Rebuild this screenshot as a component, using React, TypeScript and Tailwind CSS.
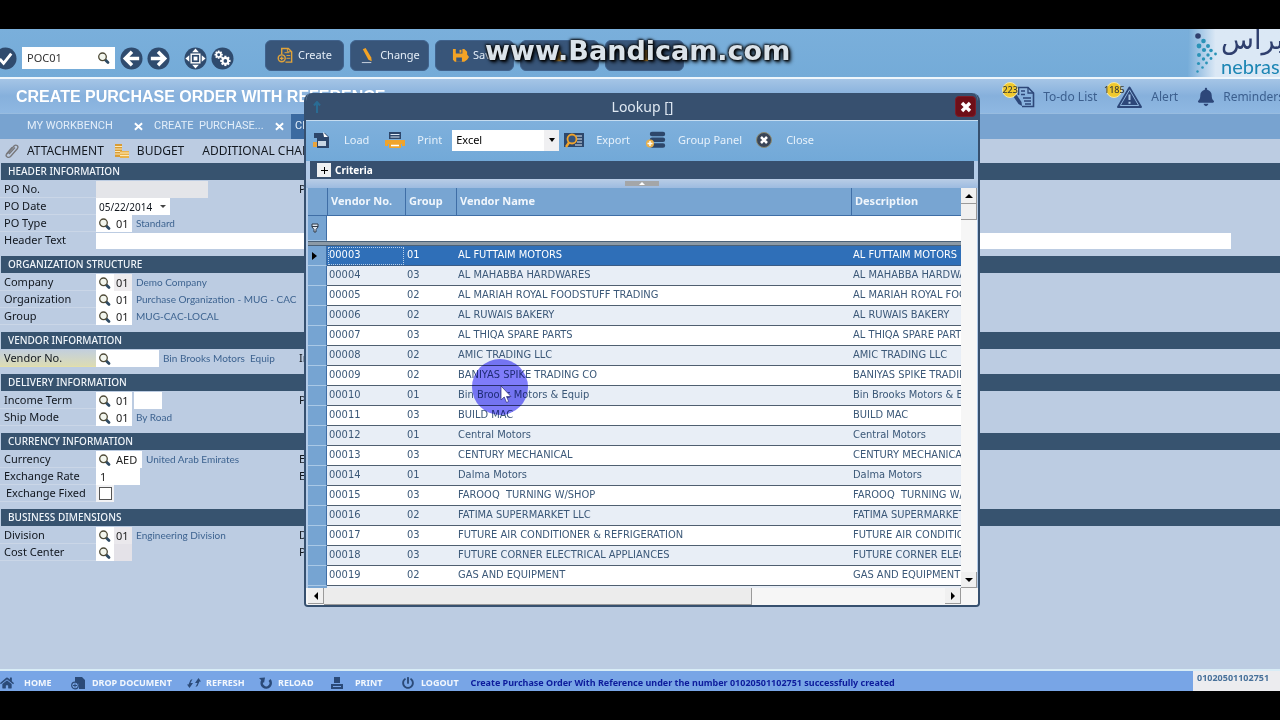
import React from "react";
import { FaHome, FaBell, FaPowerOff } from "react-icons/fa";

type Vendor = [string, string, string];

const vendors: Vendor[] = [
  ["00003", "01", "AL FUTTAIM MOTORS"],
  ["00004", "03", "AL MAHABBA HARDWARES"],
  ["00005", "02", "AL MARIAH ROYAL FOODSTUFF TRADING"],
  ["00006", "02", "AL RUWAIS BAKERY"],
  ["00007", "03", "AL THIQA SPARE PARTS"],
  ["00008", "02", "AMIC TRADING LLC"],
  ["00009", "02", "BANIYAS SPIKE TRADING CO"],
  ["00010", "01", "Bin Brooks Motors & Equip"],
  ["00011", "03", "BUILD MAC"],
  ["00012", "01", "Central Motors"],
  ["00013", "03", "CENTURY MECHANICAL"],
  ["00014", "01", "Dalma Motors"],
  ["00015", "03", "FAROOQ  TURNING W/SHOP"],
  ["00016", "02", "FATIMA SUPERMARKET LLC"],
  ["00017", "03", "FUTURE AIR CONDITIONER & REFRIGERATION"],
  ["00018", "03", "FUTURE CORNER ELECTRICAL APPLIANCES"],
  ["00019", "02", "GAS AND EQUIPMENT"],
];

function Magnifier() {
  return (
    <svg viewBox="0 0 14 14" className="size-3.5" aria-hidden="true">
      <path d="M8.2 8.800 L11 11.600" stroke="#2e4a63" strokeWidth="2.800" strokeLinecap="round" />
      <circle cx="5.500" cy="5.800" r="3.800" fill="#f3f6ee" stroke="#4f4b38" strokeWidth="1.300" />
    </svg>
  );
}

function RoundIcon({ label, children }: { label: string; children: React.ReactNode }) {
  return (
    <button aria-label={label} className="size-[23px] shrink-0">
      <svg viewBox="0 0 24 24" className="size-full">
        <circle cx="12" cy="12" r="11.5" fill="#2f4b6e" />
        {children}
      </svg>
    </button>
  );
}

function Gear({ x, y, r }: { x: number; y: number; r: number }) {
  return (
    <g transform={`translate(${x} ${y})`}>
      {[0, 45, 90, 135].map((a) => (
        <rect key={a} x={-r * 1.35} y={-r * 0.28} width={r * 2.7} height={r * 0.56} fill="#fff" transform={`rotate(${a})`} />
      ))}
      <circle r={r} fill="#fff" />
      <circle r={r * 0.48} fill="#2f4b6e" />
    </g>
  );
}

function ActionButton({ label, text, children }: { label: string; text?: string; children: React.ReactNode }) {
  return (
    <button
      aria-label={label}
      className="flex h-[31px] w-[79px] items-center justify-center gap-1 rounded-md border border-[#40628c] bg-[#385579] text-[11px] text-[#e4edf7]"
    >
      <svg viewBox="0 0 18 18" className="size-[17px]" aria-hidden="true">
        {children}
      </svg>
      {text}
    </button>
  );
}

function TopBar() {
  return (
    <header className="flex h-[50px] items-center overflow-hidden border-b-2 border-[#eef6fc] bg-gradient-to-b from-[#7aafdb] to-[#74abd8]">
      <div className="-ml-1.5 mt-2.5 flex items-center">
        <RoundIcon label="Confirm">
          <path d="M6 12.5l4 4.5 8-10" fill="none" stroke="#fff" strokeWidth="3" />
        </RoundIcon>
        <div className="ml-[5px] flex h-[22px] w-[93px] items-center bg-white pl-[5px] pr-1">
          <input aria-label="Transaction code" defaultValue="POC01" className="w-full min-w-0 flex-1 text-[11px] text-[#333] outline-none" />
          <button aria-label="Find transaction">
            <Magnifier />
          </button>
        </div>
        <div className="ml-[5px] flex gap-1">
          <RoundIcon label="Back">
            <path d="M20 12H6M12.5 5L5.500 12l7 7" fill="none" stroke="#fff" strokeWidth="3.600" />
          </RoundIcon>
          <RoundIcon label="Forward">
            <path d="M4 12h14M11.5 5l7 7-7 7" fill="none" stroke="#fff" strokeWidth="3.600" />
          </RoundIcon>
        </div>
        <div className="ml-3.5 flex gap-1">
          <RoundIcon label="Full screen">
            <path d="M12 1.500l3.500 4h-7zM12 22.500l3.500-4h-7zM1.500 12l4-3.500v7zM22.500 12l-4-3.500v7z" fill="#fff" />
            <rect x="7.500" y="7.500" width="9" height="9" fill="none" stroke="#fff" strokeWidth="1.500" />
            <rect x="10" y="10" width="4" height="4" fill="#fff" />
          </RoundIcon>
          <RoundIcon label="Settings">
            <Gear x={8} y={8} r={3.2} />
            <Gear x={15} y={14.5} r={4} />
          </RoundIcon>
        </div>
      </div>
      <div className="ml-[31px] mt-1 flex gap-[6px]">
        <ActionButton label="Create" text="Create">
          <path d="M5 8V1.500h7L15.500 5v11H9" fill="none" stroke="#e0a33a" strokeWidth="1.500" />
          <path d="M8 6h5M10 9h4M10 12h4M11 1.500V5h4" fill="none" stroke="#e0a33a" />
          <circle cx="5" cy="12" r="3.700" fill="#36547c" stroke="#e0a33a" strokeWidth="1.500" />
          <path d="M5 10v4M3 12h4" stroke="#e0a33a" strokeWidth="1.300" />
        </ActionButton>
        <ActionButton label="Change" text="Change">
          <path d="M4 2.500L7 1l6 10 .5 4-3.500-1.500z" fill="#f3a325" />
          <path d="M3 16.500h10" stroke="#cfd8e4" />
        </ActionButton>
        <ActionButton label="Save" text="Save">
          <path d="M1 2h12l3 3v3l2 2.500-2 3-3 2H3l-2-2z" fill="#f3a325" />
          <path d="M4 2h7v5H4zM4.500 11h6v4.500h-6z" fill="#36547c" />
          <path d="M8 3h2v3H8z" fill="#f3a325" />
        </ActionButton>
        <ActionButton label="Copy">
          <path d="M9 3l6 12H3z" fill="#b98732" />
        </ActionButton>
        <ActionButton label="Delete">
          <path d="M5 3h8v12H5z" fill="#c38a2c" />
        </ActionButton>
      </div>
      <div className="ml-auto flex h-full w-[92px] shrink-0 overflow-hidden bg-gradient-to-r from-[#77add9] to-[#dbe8f5] to-30% pl-1.5">
        <svg viewBox="0 0 24 48" className="h-12 w-6 shrink-0" aria-hidden="true">
          <circle cx="4" cy="7" r="2.800" fill="#2f3f6e" />
          <g fill="#2a93b8">
            <circle cx="9.500" cy="12" r="2.300" />
            <circle cx="5" cy="17" r="2.400" />
            <circle cx="14" cy="17" r="2" />
            <circle cx="10" cy="21" r="2.100" />
            <circle cx="5" cy="26" r="2" />
            <circle cx="17" cy="21.500" r="1.800" />
            <circle cx="21.500" cy="25" r="1.400" />
            <circle cx="14" cy="26" r="1.700" />
            <circle cx="9.500" cy="30" r="1.700" />
            <circle cx="17" cy="29.500" r="1.400" />
            <circle cx="4.500" cy="34.500" r="1.600" />
            <circle cx="12.500" cy="34" r="1.400" />
            <circle cx="8.500" cy="38.500" r="1.300" />
            <circle cx="3.500" cy="42.500" r="1.200" />
          </g>
        </svg>
        <div className="ml-[3px] flex flex-col whitespace-nowrap">
          <span className="h-[27px] font-['DejaVu_Sans',sans-serif] text-[27px] leading-[22px] text-[#2f3f6e]">نبراس</span>
          <span className="font-['Lato',sans-serif] text-xl leading-5 text-[#1c86b4]">nebras</span>
        </div>
      </div>
    </header>
  );
}

function Badge({ children }: { children: React.ReactNode }) {
  return (
    <span className="absolute -left-[11px] -top-1 flex size-4 items-center justify-center rounded-full border border-[#f5e9a8] bg-[#f0c92e] text-[9px] font-medium text-[#3b3d36]">
      {children}
    </span>
  );
}

function TitleBar() {
  return (
    <div className="flex h-[34px] items-center justify-between overflow-hidden bg-gradient-to-b from-[#a5c5e6] via-[#86b0dc] to-[#8fb8e2]">
      <h1 className="pl-4 pt-px font-['Liberation_Sans',Arial,sans-serif] text-base font-bold text-white">CREATE PURCHASE ORDER WITH REFERENCE</h1>
      <nav className="-mr-1 flex items-center whitespace-nowrap pt-0.5 text-xs text-[#3c5f8e]">
        <a href="#todo" className="relative flex items-center gap-2">
          <svg viewBox="0 0 22 22" className="size-[22px]" aria-hidden="true">
            <path d="M5.500 9V1.500h9.500L20.500 7v13.500H9" fill="none" stroke="#2d4779" strokeWidth="1.600" />
            <path d="M15 1.500V7h5.500M8 5h4M8 8.500h4M10 12h8M11 15h7M12 18h6" fill="none" stroke="#2d4779" strokeWidth="1.300" />
            <path d="M0 10l3-2 5.500 8 .5 4-3.500-2z" fill="#2d4779" />
          </svg>
          <Badge>223</Badge>
          To-do List
        </a>
        <a href="#alert" className="relative ml-5 flex items-center gap-[9px]">
          <svg viewBox="0 0 25 22" className="h-[22px] w-[25px]" aria-hidden="true">
            <path d="M12.500 1.500L24 21H1z" fill="#2d4779" stroke="#2d4779" strokeWidth="2" strokeLinejoin="round" />
            <path d="M12.500 3.800L21.700 19.500H3.300z" fill="none" stroke="#8db4dd" />
            <path d="M12.500 8.500v5.500M12.500 15.800v2" stroke="#a8c6e6" strokeWidth="2" />
          </svg>
          <Badge>1185</Badge>
          Alert
        </a>
        <a href="#reminders" className="ml-5 flex items-center gap-[9px]">
          <FaBell className="h-[22px] w-4 text-[#2d4779]" />
          Reminders
        </a>
      </nav>
    </div>
  );
}

function TabClose({ label }: { label: string }) {
  return (
    <button aria-label={label}>
      <svg viewBox="0 0 10 10" className="size-[9px]" aria-hidden="true">
        <path d="M1 1.500l8 7M9 1.500l-8 7" stroke="#fff" strokeWidth="2.200" />
      </svg>
    </button>
  );
}

function Tabs() {
  return (
    <div className="flex h-[26px] items-stretch border-t border-[#98bce0] bg-[#78a3d0] font-['Roboto',Arial,sans-serif] text-[11px] text-[#e3eef9]">
      <div className="flex w-[143px] items-center justify-between pl-[27px]">
        <button>MY WORKBENCH</button>
        <TabClose label="Close My Workbench" />
      </div>
      <div className="flex w-[141px] items-center justify-between pl-[11px]">
        <button>CREATE&nbsp; PURCHASE...</button>
        <TabClose label="Close Create Purchase" />
      </div>
      <button className="ml-[7px] w-24 bg-[#3b6aa0] pl-1 text-left">CREATE</button>
    </div>
  );
}

function MenuBar() {
  return (
    <div className="flex h-6 items-center bg-[#bccce2] pl-1 text-xs text-[#141a22]">
      <button className="flex items-center gap-[7px]">
        <svg viewBox="0 0 16 16" className="size-4" aria-hidden="true">
          <path d="M3 11l7-8c2-2 5 0 3.500 2.500L6.500 13.500c-2 2-5.500 0-4-2.500L8 4.500M5 11l6-6.500" fill="none" stroke="#77777a" strokeWidth="1.300" />
        </svg>
        ATTACHMENT
      </button>
      <button className="ml-2.5 flex items-center gap-[7px]">
        <svg viewBox="0 0 16 16" className="size-4" aria-hidden="true">
          <path d="M1 1h7v13H1z" fill="#d99c34" />
          <path d="M6 8h9v7H6z" fill="#eab24a" />
          <path d="M1 3.500h7M1 6h7M1 8.500h5M1 11h5M6 10h9M6 12.500h9" stroke="#fbe9b8" />
        </svg>
        BUDGET
      </button>
      <button className="ml-[18px]">ADDITIONAL CHARGES</button>
    </div>
  );
}

function Section({ title, children }: { title: string; children: React.ReactNode }) {
  return (
    <section className="pb-[7px]">
      <h2 className="mb-px ml-px h-[17px] bg-[#37536f] pl-[7px] text-[10px] font-medium leading-4 text-[#f0f5fa]">{title}</h2>
      {children}
    </section>
  );
}

interface FieldProps {
  id: string;
  label: string;
  lookup?: boolean;
  value?: string;
  box?: string;
  note?: string;
  side?: string;
  active?: boolean;
  extra?: boolean;
}

function Field({ id, label, lookup = true, value = "", box = "w-[18px] bg-white", note, side, active, extra }: FieldProps) {
  return (
    <div className="flex h-[17px] items-stretch text-[11px] leading-4 text-[#10161e]">
      <div className="flex w-[299px] shrink-0">
        <label
          htmlFor={id}
          className={
            active
              ? "w-24 shrink-0 border-b border-[#e3dfa9] bg-gradient-to-b from-[#c3cfdc] to-[#dcdcb4] pl-1"
              : "w-24 shrink-0 border-b border-[#cad6e7] pl-1"
          }
        >
          {label}
        </label>
        {lookup && (
          <button type="button" aria-label={`Look up ${label}`} className="flex w-[18px] shrink-0 items-center justify-center bg-white">
            <Magnifier />
          </button>
        )}
        <input id={id} defaultValue={value} className={`${box} shrink-0 pl-0.5 text-[#222] outline-none`} />
        {extra && <input aria-label={`${label} detail`} className="ml-0.5 w-7 bg-white" />}
        {note && (
          <span className="ml-1 whitespace-pre font-['Lato',sans-serif] text-[10px] leading-4 text-[#3d6390]">{note}</span>
        )}
      </div>
      {side && <span>{side}</span>}
    </div>
  );
}

function OrderForm() {
  return (
    <form className="flex-1 bg-[#bccce2]">
      <Section title="HEADER INFORMATION">
        <Field id="pono" label="PO No." lookup={false} box="w-28 bg-[#e4e5e9]" side="P" />
        <div className="flex h-[17px] text-[11px] leading-4 text-[#10161e]">
          <label htmlFor="podate" className="w-24 border-b border-[#cad6e7] pl-1">PO Date</label>
          <div className="flex w-[74px] items-center bg-white">
            <input id="podate" defaultValue="05/22/2014" className="w-[62px] pl-[3px] text-[10px] outline-none" />
            <button
              type="button"
              aria-label="Open calendar"
              className="ml-0.5 h-0 w-0 border-x-[3px] border-t-[3px] border-x-transparent border-t-[#444] p-0"
            />
          </div>
        </div>
        <Field id="potype" label="PO Type" value="01" note="Standard" />
        <div className="flex h-[17px] text-[11px] leading-4 text-[#10161e]">
          <label htmlFor="htext" className="w-24 shrink-0 pl-1">Header Text</label>
          <input id="htext" className="mr-[49px] h-4 min-w-0 flex-1 self-end bg-white" />
        </div>
      </Section>
      <Section title="ORGANIZATION STRUCTURE">
        <Field id="company" label="Company" value="01" box="w-[18px] bg-[#eeecee]" note="Demo Company" />
        <Field id="org" label="Organization" value="01" note="Purchase Organization - MUG - CAC" />
        <Field id="group" label="Group" value="01" note="MUG-CAC-LOCAL" />
      </Section>
      <Section title="VENDOR INFORMATION">
        <Field id="vendor" label="Vendor No." box="w-[45px] bg-white" note="Bin Brooks Motors  Equip" side="In" active />
      </Section>
      <Section title="DELIVERY INFORMATION">
        <Field id="term" label="Income Term" value="01" extra side="P" />
        <Field id="ship" label="Ship Mode" value="01" note="By Road" />
      </Section>
      <Section title="CURRENCY INFORMATION">
        <Field id="currency" label="Currency" value="AED" box="w-7 bg-white" note="United Arab Emirates" side="E" />
        <Field id="rate" label="Exchange Rate" lookup={false} value="1" box="w-11 bg-white indent-0.5" side="E" />
        <div className="flex h-[17px] text-[11px] leading-4 text-[#10161e]">
          <label htmlFor="fixed" className="w-24 border-b border-[#cad6e7] pl-1.5">Exchange Fixed</label>
          <span className="flex w-[18px] items-center justify-center bg-[#f2f2f4]">
            <input id="fixed" type="checkbox" className="size-[13px] appearance-none border border-[#555] bg-white" />
          </span>
        </div>
      </Section>
      <Section title="BUSINESS DIMENSIONS">
        <Field id="division" label="Division" value="01" box="w-[18px] bg-[#eae8ec]" note="Engineering Division" side="D" />
        <Field id="cost" label="Cost Center" box="w-[18px] bg-[#e4e2e8]" side="P" />
      </Section>
    </form>
  );
}

function StatusBar() {
  return (
    <footer className="flex h-[22px] items-stretch overflow-hidden whitespace-nowrap border-t-2 border-[#d8ecf6] bg-[#78a5e6] text-[9px] font-bold text-[#f2f7fd]">
      <a href="#home" className="flex w-[71px] items-center gap-2.5 pt-1">
        <FaHome className="size-3.5 text-[#2b4a78]" />
        HOME
      </a>
      <button className="flex w-[116px] items-center gap-[7px] pt-1">
        <svg viewBox="0 0 14 14" className="size-3.5 text-[#2b4a78]" aria-hidden="true">
          <path d="M4 1h7l3 3v9H8V8L4 6z" fill="currentColor" />
          <circle cx="4" cy="9.500" r="3.300" fill="none" stroke="currentColor" strokeWidth="1.200" />
          <path d="M4 7.500v4M2 9.500h4" stroke="currentColor" />
        </svg>
        DROP DOCUMENT
      </button>
      <button className="flex w-[72px] items-center gap-[5px] pt-1">
        <svg viewBox="0 0 14 14" className="size-3.5 text-[#2b4a78]" aria-hidden="true">
          <path d="M5.500 3L3.500 7H6l-3.500 5L0 8.500h1.500L3.500 4zM8.500 11l2-4H8l3.500-5L14 5.500h-1.500L10.500 10z" fill="currentColor" />
        </svg>
        REFRESH
      </button>
      <button className="flex w-[71px] items-center gap-[5px] pt-1">
        <svg viewBox="0 0 14 14" className="size-3.5 text-[#2b4a78]" aria-hidden="true">
          <path d="M3.500 4.500a4.500 4.500 0 1 0 7-.5" fill="none" stroke="currentColor" strokeWidth="2.600" />
          <path d="M0 2l6-.5L5 7z" fill="currentColor" />
        </svg>
        RELOAD
      </button>
      <button className="flex w-[72px] items-center gap-[11px] pt-1">
        <svg viewBox="0 0 14 14" className="size-3.5 text-[#2b4a78]" aria-hidden="true">
          <path d="M4 1h6v6H4z" fill="currentColor" />
          <path d="M1 8h12v5H1z" fill="currentColor" />
          <path d="M3 10.500h8" stroke="#78a5e6" />
        </svg>
        PRINT
      </button>
      <button className="flex items-center gap-[7px] pt-1">
        <FaPowerOff className="size-3 text-[#2b4a78]" />
        LOGOUT
      </button>
      <p className="flex flex-1 items-center pl-3 pt-1 text-[#0d1c9c]">
        Create Purchase Order With Reference under the number 01020501102751 successfully created
      </p>
      <p className="w-[87px] bg-[#ececef] pl-1 text-[#48719a]">01020501102751</p>
    </footer>
  );
}

function ToolButton({ label, children }: { label: string; children: React.ReactNode }) {
  return (
    <button className="flex items-center gap-3 text-[11px] text-[#e6f1fb]">
      <svg viewBox="0 0 20 18" className="h-[18px] w-5" aria-hidden="true">
        {children}
      </svg>
      {label}
    </button>
  );
}

function DialogTools() {
  return (
    <div className="flex h-[41px] items-center border-t border-[#c5dcf0] bg-gradient-to-b from-[#7fb0dc] to-[#72a9d8] pb-0.5 pl-1.5">
      <ToolButton label="Load">
        <path d="M5 2h8l4 4v11H5z" fill="#2d476b" />
        <path d="M11 1l5 5h-4z" fill="#fff" />
        <path d="M2 2h7v5H2z" fill="#2d476b" />
        <path d="M6 10h8v5H6z" fill="#c8d6e4" />
        <path d="M1 11h4v5H1z" fill="#e9a43c" />
      </ToolButton>
      <div className="ml-4">
        <ToolButton label="Print">
          <path d="M4 1h12v7H4z" fill="#2d476b" />
          <path d="M5.500 3.500h9M5.500 6h9" stroke="#dce8f4" />
          <path d="M0 9h20v6h-3v-2H3v2H0z" fill="#f0a42c" />
          <path d="M4 12h12v5H4z" fill="#f0a42c" />
          <path d="M6 14.500h8" stroke="#fff" strokeWidth="1.500" />
        </ToolButton>
      </div>
      <div className="relative ml-2.5 flex">
        <select aria-label="Export format" className="h-[21px] w-[107px] appearance-none bg-white pl-1 text-[11px] text-black outline-none">
          <option>Excel</option>
        </select>
        <span className="pointer-events-none absolute right-0 top-0 flex h-full w-[15px] items-center justify-center bg-[#f0f0f2]">
          <span className="border-x-[3px] border-t-4 border-x-transparent border-t-black" />
        </span>
      </div>
      <div className="ml-[5px]">
        <ToolButton label="Export">
          <path d="M0 2h20v14H0z" fill="#2d476b" />
          <path d="M12 5h6M13 8h5M13 11h5M11 14h7" stroke="#dce8f4" />
          <circle cx="8" cy="8" r="4.500" fill="#36547c" stroke="#f0a42c" strokeWidth="1.800" />
          <path d="M5 11.500L2 16" stroke="#f0a42c" strokeWidth="2.400" />
        </ToolButton>
      </div>
      <div className="ml-4">
        <ToolButton label="Group Panel">
          <g stroke="#2d476b" strokeWidth="4.400" strokeLinecap="round">
            <path d="M6 3h11M6 8.700h11M6 14.500h11" />
          </g>
          <circle cx="4" cy="12.500" r="4" fill="#e9b04a" />
          <path d="M4 10v5M1.500 12.500h5" stroke="#fff" strokeWidth="1.400" />
        </ToolButton>
      </div>
      <div className="ml-3">
        <ToolButton label="Close">
          <circle cx="10" cy="9" r="7.500" fill="#3a4658" stroke="#8a8a72" />
          <path d="M7 6l6 6M13 6l-6 6" stroke="#fff" strokeWidth="2.600" />
        </ToolButton>
      </div>
    </div>
  );
}

function VendorTable() {
  const head = "border-l border-b border-[#3f6ea6] pl-[3px] text-left font-bold text-[#f0f6fc]";
  const tag = "border-b border-r border-[#3f6ea6] border-b-[#a9c8e6] bg-[#76a4d2] p-0";
  return (
    <div className="h-[400px] min-w-0 flex-1 overflow-hidden bg-white">
      <table className="w-full table-fixed border-separate border-spacing-0 whitespace-pre text-[11px] text-[#3b5878]">
        <colgroup>
          <col className="w-[19px]" />
          <col className="w-[78px]" />
          <col className="w-[51px]" />
          <col className="w-[395px]" />
          <col />
        </colgroup>
        <thead>
          <tr className="h-7 bg-[#78a5d2]">
            <th aria-label="Row marker" className="border-b border-[#3f6ea6]" />
            <th className={head}>Vendor No.</th>
            <th className={head}>Group</th>
            <th className={head}>Vendor Name</th>
            <th className={head}>Description</th>
          </tr>
          <tr className="h-[25px]">
            <td className={tag}>
              <svg viewBox="0 0 10 10" className="ml-0.5 size-2.5" aria-hidden="true">
                <path d="M2 1h6v3L6 6.500V9H4V6.500L2 4z" fill="#dfe8f2" stroke="#303a48" />
                <path d="M2 3.500h6" stroke="#303a48" />
              </svg>
            </td>
            <td colSpan={4} className="bg-white p-0">
              <input aria-label="Filter vendors" className="block h-5 w-full outline-none" />
            </td>
          </tr>
          <tr className="h-[5px]">
            <td colSpan={5} className="h-[5px] border-b border-t border-[#4a6178] bg-[#8c9aa6] p-0" />
          </tr>
        </thead>
        <tbody className="font-['DejaVu_Sans_Condensed','DejaVu_Sans',sans-serif] text-[11px]">
          {vendors.map(([no, group, name], i) => {
            const cell =
              i === 0
                ? "h-5 overflow-hidden border-b border-[#3a5c86] bg-[#2f6fb8] py-0 pl-0.5 pr-0 text-white"
                : i % 2
                  ? "h-5 overflow-hidden border-b border-[#4f5f70] bg-[#e8eef6] py-0 pl-0.5 pr-0"
                  : "h-5 overflow-hidden border-b border-[#4f5f70] bg-white py-0 pl-0.5 pr-0";
            return (
              <tr key={no}>
                <td className={tag}>
                  {i === 0 && <span className="ml-1 block w-0 border-y-4 border-l-[5px] border-y-transparent border-l-black" />}
                </td>
                <td className={i === 0 ? `${cell} outline-1 -outline-offset-2 outline-dotted outline-[#b8d0ea]` : cell}>{no}</td>
                <td className={cell}>{group}</td>
                <td className={cell}>{name}</td>
                <td className={cell}>{name}</td>
              </tr>
            );
          })}
        </tbody>
      </table>
      <div className="flex h-1">
        <div className="w-[19px] bg-[#76a4d2]" />
        <div className="flex-1 bg-[#e8eef6]" />
      </div>
    </div>
  );
}

function ScrollArrow({ label, arrow }: { label: string; arrow: string }) {
  return (
    <button aria-label={label} className="flex size-4 shrink-0 items-center justify-center border-b border-r border-[#9a9a9a] bg-[#f0f0f0]">
      <span className={arrow} />
    </button>
  );
}

function LookupDialog() {
  return (
    <div className="pointer-events-none absolute inset-x-0 top-[93px] flex justify-center pl-1">
      <div
        role="dialog"
        aria-label="Lookup"
        className="pointer-events-auto w-[676px] overflow-hidden rounded-t-lg rounded-b border-2 border-t-0 border-[#36506f] bg-[#b3cbe8]"
      >
        <div className="flex h-[27px] items-center bg-[#37506f]">
          <svg viewBox="0 0 10 12" className="ml-1.5 h-3 w-2.5" aria-hidden="true">
            <path d="M5 1v11M2 4.500L5 1l3 3.500" fill="none" stroke="#2a6c94" strokeWidth="2" />
          </svg>
          <h2 className="flex-1 pl-2 text-center text-sm text-[#dfe8f2]">Lookup []</h2>
          <button aria-label="Close dialog" className="mr-0.5 flex size-[21px] items-center justify-center rounded-sm border border-[#7d1c27] bg-[#6e0f18]">
            <svg viewBox="0 0 12 12" className="size-3">
              <path d="M2 2l8 8M10 2l-8 8" stroke="#fff" strokeWidth="3.400" />
            </svg>
          </button>
        </div>
        <DialogTools />
        <div className="mx-1 flex h-[18px] items-center gap-1 bg-[#37506f] pl-[7px] text-[10px] font-bold text-white">
          <button aria-label="Expand criteria" className="flex size-3.5 items-center justify-center bg-[#eef0f2]">
            <svg viewBox="0 0 9 9" className="size-[9px]">
              <path d="M4.500 1v7M1 4.500h7" stroke="#000" />
            </svg>
          </button>
          Criteria
        </div>
        <div className="flex h-[9px] items-center justify-center bg-gradient-to-b from-[#b9cde6] to-[#9dbbe0]">
          <button aria-label="Collapse criteria" className="flex h-[5px] w-[34px] items-center justify-center bg-[#a4a6a8]">
            <span className="border-x-[3px] border-b-[3px] border-x-transparent border-b-white" />
          </button>
        </div>
        <div className="flex pl-0.5 pr-px">
          <VendorTable />
          <div className="flex w-4 flex-col bg-[#f6f6f6]">
            <ScrollArrow label="Scroll up" arrow="border-x-4 border-b-4 border-x-transparent border-b-black" />
            <div className="h-4 border-b border-r border-[#9a9a9a] bg-[#f0f0f0]" />
            <div className="flex-1" />
            <ScrollArrow label="Scroll down" arrow="border-x-4 border-t-4 border-x-transparent border-t-black" />
          </div>
        </div>
        <div className="flex h-[17px] bg-[#f6f6f6] pl-0.5 pr-[17px]">
          <ScrollArrow label="Scroll left" arrow="border-y-4 border-r-4 border-y-transparent border-r-black" />
          <div className="w-[428px] border-b border-r border-[#9a9a9a] bg-[#ececec]" />
          <div className="flex-1" />
          <ScrollArrow label="Scroll right" arrow="border-y-4 border-l-4 border-y-transparent border-l-black" />
        </div>
      </div>
    </div>
  );
}

export default function App() {
  return (
    <div className="relative flex min-h-screen flex-col overflow-hidden bg-black py-[29px] font-['Noto_Sans',sans-serif]">
      <TopBar />
      <TitleBar />
      <Tabs />
      <MenuBar />
      <OrderForm />
      <StatusBar />
      <LookupDialog />
      <div className="pointer-events-none absolute left-[472px] top-[359px] size-14 rounded-full bg-[#7f7cfa] mix-blend-multiply" />
      <svg viewBox="0 0 12 19" className="pointer-events-none absolute left-[500px] top-[385px] h-[19px] w-3" aria-hidden="true">
        <path d="M1 1v14l3.200-3 2.300 5.500 2.200-1L6.500 11.500H11z" fill="#fff" stroke="#3a3a8a" strokeWidth=".8" />
      </svg>
      <p className="pointer-events-none absolute left-[485px] top-[31px] whitespace-nowrap font-['DejaVu_Sans',sans-serif] text-[27px] font-bold text-[#dbe3ea] [text-shadow:0_0_2px_#000,1px_1px_3px_#000,2px_2px_4px_#000,-1px_-1px_3px_#1a2430]">
        www.Bandicam.com
      </p>
    </div>
  );
}
